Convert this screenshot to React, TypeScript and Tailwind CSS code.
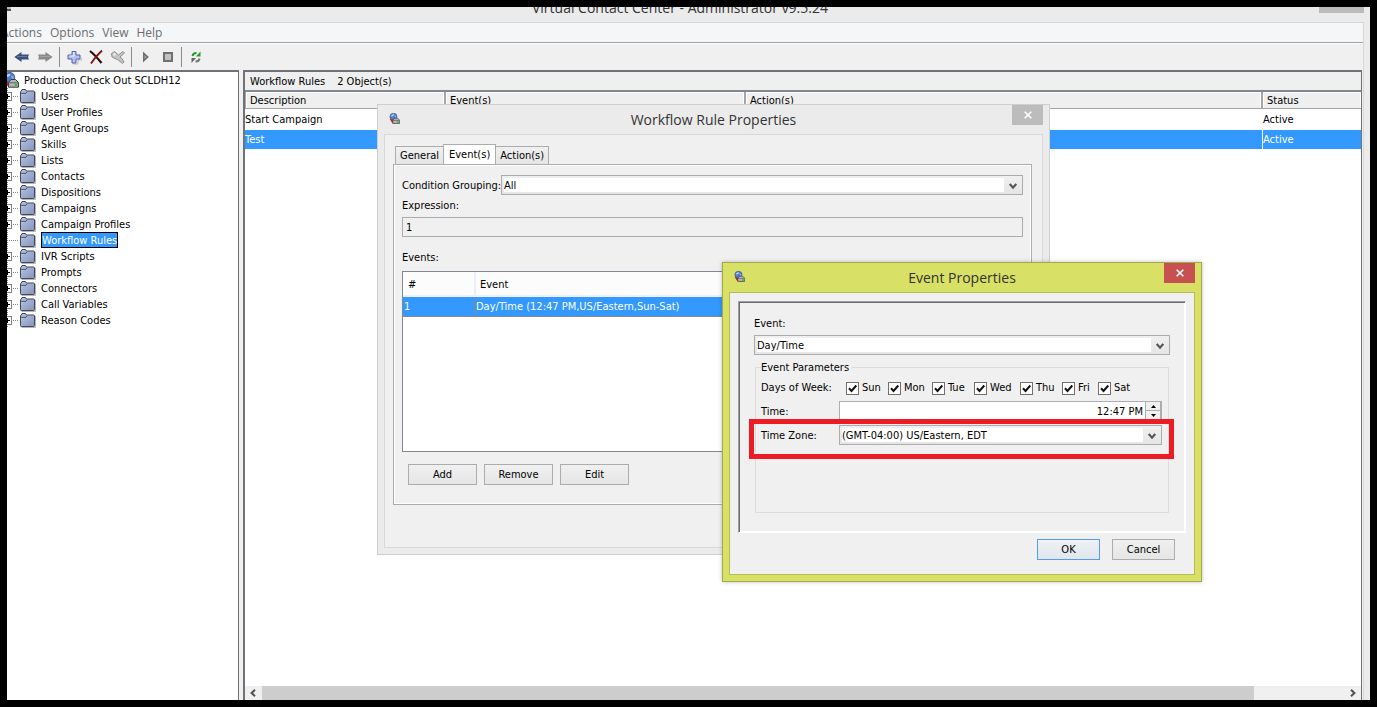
import { useState, type ReactNode } from "react";

const folders = [
  "Users",
  "User Profiles",
  "Agent Groups",
  "Skills",
  "Lists",
  "Contacts",
  "Dispositions",
  "Campaigns",
  "Campaign Profiles",
  "Workflow Rules",
  "IVR Scripts",
  "Prompts",
  "Connectors",
  "Call Variables",
  "Reason Codes",
];

const days = ["Sun", "Mon", "Tue", "Wed", "Thu", "Fri", "Sat"];

const raised = "border border-[#acacac] bg-linear-to-b from-[#f0f0f0] to-[#e5e5e5]";

function AppIcon({ className = "size-[11px]" }: { className?: string }) {
  return (
    <svg viewBox="0 0 16 16" className={className} aria-hidden="true">
      <circle cx="6.500" cy="5.500" r="5.200" fill="#4a7fd0" stroke="#3d4b6e" strokeWidth=".8" />
      <path d="M2.500 5q1.500-3.500 5-3q-.5 2.500-2.500 2.700z" fill="#c4d8f8" />
      <path d="M8 3.500l2.500 1l.3 2.500l-2-.5z" fill="#8fb3ec" />
      <path d="M1 8.500l4 1l2 3l-1 2.800L3.500 13z" fill="#c9242b" />
      <path d="M5.500 10.500l2.500-3h4.500l3 3v4.700h-10z" fill="#b4b4b4" stroke="#3c3c3c" strokeWidth="1" />
      <path d="M5.500 10.800h9.800" stroke="#5a5a5a" strokeWidth=".9" />
      <circle cx="13" cy="13" r="1.400" fill="#2fbf3a" />
    </svg>
  );
}

function FolderIcon() {
  return (
    <svg viewBox="0 0 16 16" className="size-4 shrink-0" aria-hidden="true">
      <defs>
        <linearGradient id="folder" x1="0" y1="0" x2="1" y2="1">
          <stop offset="0" stopColor="#b9c6e6" />
          <stop offset="1" stopColor="#8593b8" />
        </linearGradient>
      </defs>
      <path d="M1.500 15.500H15.500V4" fill="none" stroke="#b5b5b5" />
      <path d="M.5 4q0-.8.8-1l.7-1.500h3.500L6.500 3h7.200q.8 0 .8 1v9.700q0 .8-.8.8H1.300q-.8 0-.8-.8z" fill="url(#folder)" stroke="#3f475a" />
      <path d="M1 5.300h5l1.200-1.300" fill="none" stroke="#4a5368" />
    </svg>
  );
}

function Branch({ leaf }: { leaf: boolean }) {
  return (
    <svg viewBox="0 0 17 16" className="h-4 w-[17px] shrink-0" shapeRendering="crispEdges" aria-hidden="true">
      <path d="M4.500 0v16M4 8.500h12" stroke="#808080" strokeDasharray="1 1" fill="none" />
      {!leaf && (
        <>
          <rect x=".5" y="4.500" width="8" height="8" fill="#fff" stroke="#808080" />
          <path d="M2 8.500h5M4.500 6v5" stroke="#000" />
        </>
      )}
    </svg>
  );
}

function Combo({ value, id }: { value: string; id: string }) {
  return (
    <div className={`relative h-5 flex-1 p-[2px] pr-0 ${raised}`}>
      <select
        id={id}
        className="block h-[14px] w-full appearance-none bg-linear-to-r from-white to-white bg-size-[calc(100%_-_18px)_100%] bg-no-repeat pt-px pr-[18px] leading-[13px] outline-none"
      >
        <option>{value}</option>
      </select>
      <div className="pointer-events-none absolute inset-y-0 right-0 flex w-[18px] items-center justify-center pt-[3px]">
        <svg viewBox="0 0 8 7" className="h-[7px] w-2" aria-hidden="true">
          <path d="M.7 1L4 4.700L7.300 1" fill="none" stroke="#555" strokeWidth="2.200" />
        </svg>
      </div>
    </div>
  );
}

function ToolButton({ label, children, className }: { label: string; children: ReactNode; className: string }) {
  return (
    <button type="button" aria-label={label} className={`flex items-center justify-center ${className}`}>
      <svg viewBox="0 0 16 16" className="size-4 shrink-0" aria-hidden="true">
        {children}
      </svg>
    </button>
  );
}

function Separator() {
  return <span className="h-5 w-px bg-[#8b8b8b]" />;
}

function Toolbar() {
  return (
    <div role="toolbar" aria-label="Main toolbar" className="flex h-[26px] shrink-0 items-center border-t border-white pl-[3px]">
      <ToolButton label="Back" className="w-6">
        <path d="M.3 8L7.500 3v2.500H15l-1 2.500l1 2.500H7.500V13z" fill="#3a5078" />
        <path d="M3 7.500h10" stroke="#5f7ba6" />
      </ToolButton>
      <ToolButton label="Forward" className="w-[22px]">
        <path d="M15.700 8L8.500 3v2.500H1l1 2.500l-1 2.500h7.500V13z" fill="#8a8a8a" />
        <path d="M3 7.500h10" stroke="#a3a3a3" />
      </ToolButton>
      <span className="w-[3px]" />
      <Separator />
      <span className="w-[3px]" />
      <ToolButton label="Add" className="w-[22px]">
        <path d="M7 15h5v-4h4V8" stroke="#bbb" fill="none" />
        <path d="M6 2.500h4V6h4v4h-4v4H6v-4H2V6h4z" fill="#b3bff0" stroke="#5762a6" />
        <path d="M7 3.500h1V7H3.500" stroke="#eef1ff" fill="none" />
      </ToolButton>
      <ToolButton label="Delete" className="w-[22px]">
        <path d="M2 2q5 4 11.500 12" stroke="#2b0c0c" strokeWidth="2.200" fill="none" />
        <path d="M14 1.500Q7 8 3 14.500" stroke="#7d1313" strokeWidth="1.800" fill="none" />
      </ToolButton>
      <ToolButton label="Properties" className="w-[22px]">
        <path d="M1.500 4.500l3-2l4 3.500l4.500-3.500l1.500 1.500L10 8l1.500 1l2.500 4l-1.500 1.500l-5-4L5 9.500L2 8z" fill="#c4c4c4" stroke="#8f8f8f" />
        <circle cx="4.500" cy="5.500" r="1.300" fill="#f0f0f0" />
      </ToolButton>
      <span className="w-[2px]" />
      <Separator />
      <span className="w-[3px]" />
      <ToolButton label="Start" className="w-[22px]">
        <path d="M5 2.500L10.800 8L5 13.500z" fill="#6f6f6f" />
        <path d="M6.500 6l2 2l-2 2z" fill="#a9a9a9" />
      </ToolButton>
      <ToolButton label="Stop" className="w-[22px]">
        <path d="M4 4h8v8H4z" fill="#c2c2c2" stroke="#707070" strokeWidth="2" />
      </ToolButton>
      <span className="w-[2px]" />
      <Separator />
      <span className="w-[3px]" />
      <ToolButton label="Refresh" className="w-[22px]">
        <path d="M4.500 7q.5-3 4-3" fill="none" stroke="#1f9b2a" strokeWidth="2" />
        <path d="M8 7.500h4.500v-5z" fill="#1f9b2a" />
        <path d="M11.500 9.500q-.5 3-4 3" fill="none" stroke="#777" strokeWidth="2" />
        <path d="M8 9H3.500v5z" fill="#666" />
      </ToolButton>
    </div>
  );
}

function Tree() {
  return (
    <aside className="w-[232px] shrink-0 overflow-hidden border-t-2 border-r border-[#6f7378] bg-white">
      <ul className="-ml-1">
        <li className="flex h-4 items-center gap-[5px]">
          <AppIcon className="size-4" />
          <span className="pt-[2px]">Production Check Out SCLDH12</span>
        </li>
        {folders.map((name) => (
          <li key={name} className="flex h-4 items-center">
            <Branch leaf={name === "Workflow Rules"} />
            <FolderIcon />
            <a
              href="#"
              className={
                name === "Workflow Rules"
                  ? "ml-[5px] h-4 border border-black bg-[#3399ff] pt-px leading-[13px] text-white"
                  : "ml-[5px] h-4 pt-[2px] leading-[13px]"
              }
            >
              {name}
            </a>
          </li>
        ))}
      </ul>
    </aside>
  );
}

function RuleList() {
  const head =
    "h-[17px] border-r border-b border-l border-[#a5a5a5] bg-[#efefef] pt-[2px] pl-1 text-left leading-[14px] font-normal shadow-[inset_1px_1px_0_#fff,inset_-1px_0_0_#fff]";
  return (
    <main className="flex min-w-0 flex-1 flex-col border-t-2 border-r border-l-2 border-[#6f7378] bg-white">
      <div className="flex h-5 shrink-0 items-center gap-3 border-b-2 border-[#828790] bg-[#efefef] pt-[2px] pl-[5px]">
        <h2>Workflow Rules</h2>
        <span>2 Object(s)</span>
      </div>
      <table className="w-full table-fixed border-separate border-spacing-0">
        <colgroup>
          <col className="w-[200px]" />
          <col className="w-[300px]" />
          <col />
          <col className="w-[99px]" />
        </colgroup>
        <thead>
          <tr>
            <th className={head}>Description</th>
            <th className={head}>Event(s)</th>
            <th className={head}>Action(s)</th>
            <th className={`${head} border-r-0`}>Status</th>
          </tr>
        </thead>
        <tbody>
          <tr>
            <td className="h-[21px]">Start Campaign</td>
            <td />
            <td />
            <td className="border-l border-white">Active</td>
          </tr>
          <tr className="bg-[#3399ff] text-white">
            <td className="h-[19px]">Test</td>
            <td />
            <td />
            <td className="border-l border-white">Active</td>
          </tr>
        </tbody>
      </table>
      <div className="mt-auto flex h-[14px] shrink-0 items-center bg-[#f0f0f0]">
        <button type="button" aria-label="Scroll left" className="flex w-[17px] justify-center">
          <svg viewBox="0 0 7 8" className="h-2 w-[7px]" aria-hidden="true">
            <path d="M5 .8L1.600 4L5 7.200" fill="none" stroke="#505050" strokeWidth="2" />
          </svg>
        </button>
        <div className="flex h-full flex-1">
          <div className="h-full w-11/12 bg-[#cdcdcd]" />
        </div>
        <button type="button" aria-label="Scroll right" className="flex w-[17px] justify-center">
          <svg viewBox="0 0 7 8" className="h-2 w-[7px]" aria-hidden="true">
            <path d="M2 .8L5.400 4L2 7.200" fill="none" stroke="#505050" strokeWidth="2" />
          </svg>
        </button>
      </div>
    </main>
  );
}

function DialogTitle({ title, closeClass }: { title: string; closeClass: string }) {
  return (
    <header className="flex h-[29px] shrink-0 items-start pr-[6px] pl-[11px]">
      <span className="flex h-[26px] w-[26px] items-center">
        <AppIcon />
      </span>
      <h2 className="flex-1 pt-[5px] text-center font-['Open_Sans','Noto_Sans',sans-serif] text-sm leading-5 text-[#333]">{title}</h2>
      <button type="button" aria-label="Close" className={`flex h-5 w-[31px] items-center justify-center ${closeClass}`}>
        <svg viewBox="0 0 8 8" className="size-2" aria-hidden="true">
          <path d="M.7 .7L7.300 7.300M7.300 .7L.7 7.300" stroke="#fff" strokeWidth="1.600" />
        </svg>
      </button>
    </header>
  );
}

function WorkflowDialog() {
  const tab = "border border-b-0 border-[#acacac] px-1";
  return (
    <section
      role="dialog"
      aria-label="Workflow Rule Properties"
      className="absolute top-[104px] left-[377px] flex h-[451px] w-[673px] flex-col border border-[#cfcfcf] bg-[#ebebeb]"
    >
      <DialogTitle title="Workflow Rule Properties" closeClass="bg-[#bcbcbc]" />
      <div className="mx-[6px] mb-[6px] flex-1 border border-[#d9d9d9] bg-[#f0f0f0] px-2 pt-[9px]">
        <div role="tablist" className="flex items-end pl-[2px]">
          <button role="tab" type="button" className={`${tab} h-[18px] bg-linear-to-b from-[#f0f0f0] to-[#e5e5e5]`}>
            General
          </button>
          <button role="tab" type="button" aria-selected="true" className={`${tab} -mx-px h-5 bg-white px-[5px]`}>
            Event(s)
          </button>
          <button role="tab" type="button" className={`${tab} h-[18px] bg-linear-to-b from-[#f0f0f0] to-[#e5e5e5]`}>
            Action(s)
          </button>
        </div>
        <div className="mr-[2px] h-[341px] border border-[#acacac] px-2 pt-[10px] shadow-[inset_0_0_0_1px_#fff]">
          <div className="flex items-center">
            <label htmlFor="grouping" className="w-[99px] shrink-0 pt-px whitespace-nowrap">
              Condition Grouping:
            </label>
            <Combo id="grouping" value="All" />
          </div>
          <label htmlFor="expression" className="mt-1 block leading-[14px]">
            Expression:
          </label>
          <input
            id="expression"
            readOnly
            value="1"
            className="mt-1 block h-5 w-full border border-[#abadb3] bg-[#f0f0f0] px-[3px] pt-px outline-none"
          />
          <h3 className="mt-[14px] leading-[14px]">Events:</h3>
          <div className="mt-[6px] h-[181px] border border-[#828790] bg-white">
            <table className="w-full table-fixed border-separate border-spacing-0">
              <colgroup>
                <col className="w-[73px]" />
                <col />
              </colgroup>
              <thead>
                <tr className="bg-[#fcfcfc]">
                  <th className="h-[25px] border-r-2 border-b-2 border-r-[#e8eefa] border-b-[#f0f0f0] px-[5px] pt-[2px] text-left font-normal">#</th>
                  <th className="h-[25px] border-b-2 border-[#f0f0f0] px-1 pt-[2px] text-left font-normal">Event</th>
                </tr>
              </thead>
              <tbody>
                <tr className="bg-[#3399ff] text-white">
                  <td className="h-5 border-r border-b border-[#828790] px-px">1</td>
                  <td className="h-5 border-b border-[#828790]">Day/Time (12:47 PM,US/Eastern,Sun-Sat)</td>
                </tr>
              </tbody>
            </table>
          </div>
          <div className="mt-3 flex gap-[7px] pl-[6px]">
            {["Add", "Remove", "Edit"].map((label) => (
              <button key={label} type="button" className={`h-[21px] w-[69px] ${raised}`}>
                {label}
              </button>
            ))}
          </div>
        </div>
      </div>
    </section>
  );
}

function DayBox({ day }: { day: string }) {
  const [on, setOn] = useState(true);
  return (
    <label className="flex items-center gap-[3px]">
      <span className="relative size-[13px] shrink-0">
        <input
          type="checkbox"
          checked={on}
          onChange={() => setOn(!on)}
          className="block size-[13px] appearance-none border border-[#707070] bg-white"
        />
        {on && (
          <svg viewBox="0 0 13 13" className="pointer-events-none absolute inset-0 size-[13px]" aria-hidden="true">
            <path d="M3 6.300L5.500 9L10.300 3.500" fill="none" stroke="#111" strokeWidth="2" />
          </svg>
        )}
      </span>
      {day}
    </label>
  );
}

function EventDialog() {
  return (
    <section
      role="dialog"
      aria-label="Event Properties"
      className="absolute top-[262px] left-[722px] flex h-[320px] w-[480px] flex-col border border-[#a3aa4a] bg-[#d8e065] shadow-[0_0_4px_rgba(0,0,0,0.25)]"
    >
      <DialogTitle title="Event Properties" closeClass="bg-[#c75050]" />
      <div className="mx-[6px] mb-[6px] flex-1 border border-[#b5bc55] bg-[#f0f0f0] px-2 pt-2">
        <div className="h-[232px] border border-t-[#a0a0a0] border-r-white border-b-white border-l-[#a0a0a0] px-[15px] pt-[15px] shadow-[inset_1px_1px_0_#696969,inset_-1px_-1px_0_#fff]">
          <label htmlFor="event" className="block leading-[14px]">
            Event:
          </label>
          <div className="mt-1 flex">
            <Combo id="event" value="Day/Time" />
          </div>
          <fieldset className="mx-px mt-[5px] h-[153px] border border-[#dcdcdc] pr-[6px] pl-[5px]">
            <legend className="pt-px pr-[3px] leading-[14px]">Event Parameters</legend>
            <div className="mt-[5px] flex h-4 items-center">
              <span className="w-[85px] shrink-0">Days of Week:</span>
              <div className="grid flex-1 grid-cols-[42px_44px_42px_46px_42px_36px_auto]">
                {days.map((day) => (
                  <DayBox key={day} day={day} />
                ))}
              </div>
            </div>
            <div className="mt-[5px] flex items-center">
              <label htmlFor="time" className="w-[78px] shrink-0 pt-px">
                Time:
              </label>
              <div className="flex h-5 flex-1 border border-[#abadb3] bg-white">
                <input id="time" defaultValue="12:47 PM" className="min-w-0 flex-1 px-[2px] pt-px text-right outline-none" />
                <div className="flex w-4 flex-col border-l border-[#acacac] bg-[#f0f0f0]">
                  {["Later", "Earlier"].map((label) => (
                    <button key={label} type="button" aria-label={label} className="flex flex-1 items-center justify-center border-r border-b border-[#acacac]">
                      <svg viewBox="0 0 5 3" className="h-[3px] w-[5px]" aria-hidden="true">
                        <path d={label === "Later" ? "M0 3L2.500 0L5 3z" : "M0 0L2.500 3L5 0z"} fill="#000" />
                      </svg>
                    </button>
                  ))}
                </div>
              </div>
            </div>
            <div className="mt-1 flex items-center">
              <label htmlFor="zone" className="w-[78px] shrink-0 pt-px">
                Time Zone:
              </label>
              <Combo id="zone" value="(GMT-04:00) US/Eastern, EDT" />
            </div>
          </fieldset>
        </div>
        <div className="mt-[6px] flex justify-end gap-3 pr-[11px]">
          <button type="button" className="h-[21px] w-[63px] border border-[#569de5] bg-linear-to-b from-[#eef1f5] to-[#dfe6ed]">
            OK
          </button>
          <button type="button" className={`h-[21px] w-[63px] ${raised}`}>
            Cancel
          </button>
        </div>
      </div>
      <div className="pointer-events-none absolute top-[156px] left-[26px] h-10 w-[425px] border-5 border-[#ed1c24]" />
    </section>
  );
}

export default function App() {
  return (
    <div className="relative h-screen overflow-hidden bg-black p-[7px] font-['DejaVu_Sans_Condensed','DejaVu_Sans',sans-serif] text-[11px] leading-4 text-black">
      <div className="flex h-full flex-col overflow-hidden bg-[#ebebeb]">
        <header className="flex h-[15px] shrink-0 items-end overflow-hidden pr-[6px]">
          <span className="h-1 w-1 self-start border-b-2 border-[#555] bg-[#bbb]" />
          <h1 className="flex-1 pb-1 pl-[30px] text-center font-['Open_Sans','Noto_Sans',sans-serif] text-sm leading-5 text-[#333]">
            Virtual Contact Center - Administrator v9.5.24
          </h1>
          <button type="button" aria-label="Window controls" className="h-[6px] w-[45px] self-start bg-[#bcbcbc]" />
        </header>
        <div className="mr-[6px] flex min-h-0 flex-1 flex-col border-t border-r border-[#d6d8da] bg-[#f0f0f0]">
          <nav className="h-5 shrink-0 overflow-hidden border-b border-[#a0a0a0] bg-[#f5f6f7] font-['Open_Sans','Noto_Sans',sans-serif] text-xs leading-5 text-[#6d6d6d]">
            <div className="-ml-[6px] flex gap-2">
              <a href="#">Actions</a>
              <a href="#">Options</a>
              <a href="#">View</a>
              <a href="#">Help</a>
            </div>
          </nav>
          <Toolbar />
          <div className="flex min-h-0 flex-1 gap-1 pt-px pr-px">
            <Tree />
            <RuleList />
          </div>
        </div>
      </div>
      <WorkflowDialog />
      <EventDialog />
    </div>
  );
}
